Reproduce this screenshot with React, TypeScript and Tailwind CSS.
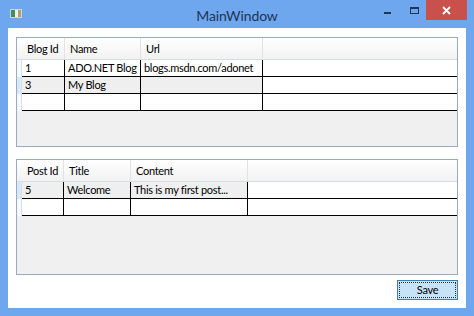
type Col = { name: string; w: number };

function DataGrid({
  cols,
  rows,
  selected,
  height,
}: {
  cols: Col[];
  rows: string[][];
  selected: number;
  height: string;
}) {
  return (
    <div className={`flex flex-col border border-[#9aabc0] bg-[#f0f0f0] ${height}`}>
      {/* header */}
      <div className="flex h-[22px] shrink-0 border-b border-[#d5dce4] bg-gradient-to-b from-white to-[#f2f2f2]">
        <div className="w-[5px] shrink-0" />
        {cols.map((c) => (
          <div
            key={c.name}
            className="shrink-0 overflow-hidden whitespace-nowrap border-r border-[#e2e2e2] pl-[5px] leading-[21px]"
            style={{ width: c.w }}
          >
            {c.name}
          </div>
        ))}
        <div className="flex-1" />
      </div>
      {/* rows + new row */}
      {[...rows, null].map((r, i) => (
        <div key={i} className="flex h-[17px] shrink-0">
          <div
            className={`w-[5px] shrink-0 border-r border-[#d8e2ec] ${
              i === selected ? "bg-[#d6e8fa]" : "bg-[#f7f9fb]"
            }`}
          />
          <div className="flex flex-1 border-b border-black">
            {cols.map((c, j) => (
              <div
                key={c.name}
                className={`shrink-0 overflow-hidden whitespace-nowrap border-r border-black pl-[3px] leading-[16px] ${
                  i === selected ? "bg-[#efefef]" : "bg-white"
                }`}
                style={{ width: c.w }}
              >
                {r ? r[j] : ""}
              </div>
            ))}
            <div className="flex-1 bg-white" />
          </div>
        </div>
      ))}
      <div className="flex-1" />
    </div>
  );
}

export default function App() {
  return (
    <div
      className="flex h-[316px] w-[474px] flex-col bg-[#6fa7ee] text-[11px] tracking-[-0.3px] text-black"
      style={{ fontFamily: 'Lato, "Noto Sans", sans-serif' }}
    >
      {/* title bar */}
      <div className="grid h-[28px] shrink-0 grid-cols-[1fr_auto_1fr] items-start">
        <div className="flex">
          <div className="ml-[10px] mt-[9px] flex h-[9px] w-[12px] border border-[#c9d4e0] bg-[#eef1f4]">
            <div className="w-[4px] bg-[#3f8f5a]" />
            <div className="flex-1" />
            <div className="w-[3px] bg-[#b6a06a]" />
          </div>
        </div>
        <div className="pt-[5px] text-center text-[14px] tracking-[-0.1px] text-[#1d3557]">MainWindow</div>
        <div className="flex justify-end">
          <div className="mt-[12px] h-[2px] w-[7px] bg-[#1d3557]" />
          <div className="ml-[19px] mt-[7px] h-[7px] w-[9px] border border-t-2 border-[#1d3557]" />
          <div className="ml-[7px] flex h-[20px] w-[41px] items-center justify-center bg-[#c9504b]">
            <svg width="9" height="9" viewBox="0 0 9 9">
              <path d="M1 1 L8 8 M8 1 L1 8" stroke="white" strokeWidth="1.8" />
            </svg>
          </div>
          <div className="w-[7px]" />
        </div>
      </div>

      {/* client area */}
      <div className="mx-[8px] mb-[8px] flex flex-1 flex-col bg-white px-[8px] pt-[9px]">
        <DataGrid
          height="h-[110px]"
          selected={1}
          cols={[
            { name: "Blog Id", w: 43 },
            { name: "Name", w: 76 },
            { name: "Url", w: 122 },
          ]}
          rows={[
            ["1", "ADO.NET Blog", "blogs.msdn.com/adonet"],
            ["3", "My Blog", ""],
          ]}
        />
        <div className="mt-[12px]">
          <DataGrid
            height="h-[116px]"
            selected={0}
            cols={[
              { name: "Post Id", w: 42 },
              { name: "Title", w: 67 },
              { name: "Content", w: 117 },
            ]}
            rows={[["5", "Welcome", "This is my first post..."]]}
          />
        </div>
        <div className="mt-[5px] flex justify-end">
          <button className="h-[20px] w-[61px] border border-[#3c7fb1] bg-[#c6e3f8] p-[1px]">
            <div className="flex h-full w-full items-center justify-center border border-dotted border-[#333]">
              Save
            </div>
          </button>
        </div>
      </div>
    </div>
  );
}
